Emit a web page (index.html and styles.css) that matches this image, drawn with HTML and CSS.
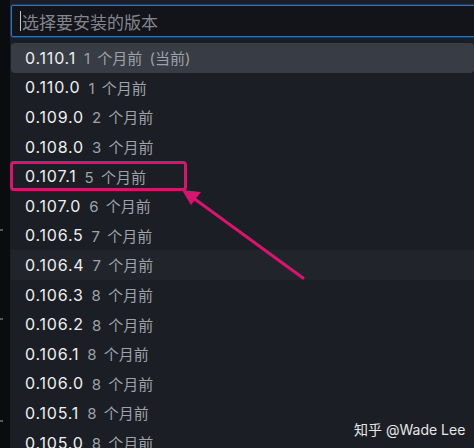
FILE: index.html
```html
<!DOCTYPE html>
<html lang="zh">
<head>
    <meta charset="UTF-8">
    <title>选择要安装的版本</title>
    <link rel="stylesheet" href="styles.css">
</head>
<body>
    <div class="side">
        <span class="tick t1"></span>
        <span class="tick t2"></span>
        <span class="tick t3"></span>
    </div>
    <div class="picker">
        <div class="search">
            <span class="caret"></span>
            <span class="placeholder">选择要安装的版本</span>
        </div>
        <ul class="versions">
            <li class="item active"><b>0.110.1</b><span>1 个月前 (当前)</span></li>
            <li class="item"><b>0.110.0</b><span>1 个月前</span></li>
            <li class="item"><b>0.109.0</b><span>2 个月前</span></li>
            <li class="item"><b>0.108.0</b><span>3 个月前</span></li>
            <li class="item marked"><b>0.107.1</b><span>5 个月前</span></li>
            <li class="item"><b>0.107.0</b><span>6 个月前</span></li>
            <li class="item"><b>0.106.5</b><span>7 个月前</span></li>
            <li class="item hover"><b>0.106.4</b><span>7 个月前</span></li>
            <li class="item"><b>0.106.3</b><span>8 个月前</span></li>
            <li class="item"><b>0.106.2</b><span>8 个月前</span></li>
            <li class="item"><b>0.106.1</b><span>8 个月前</span></li>
            <li class="item"><b>0.106.0</b><span>8 个月前</span></li>
            <li class="item"><b>0.105.1</b><span>8 个月前</span></li>
            <li class="item"><b>0.105.0</b><span>8 个月前</span></li>
        </ul>
    </div>

    <!-- 标注箭头 -->
    <svg class="arrow" width="474" height="448" viewBox="0 0 474 448">
        <line x1="303" y1="278" x2="192" y2="197" stroke="#d6156f" stroke-width="3" stroke-linecap="round"/>
        <polygon points="182,190 201,192 191,205" fill="#d6156f"/>
    </svg>

    <div class="mark">知乎 @Wade Lee</div>
</body>
</html>
```

FILE: styles.css
```css
body {
    margin: 0;
    width: 474px;
    height: 448px;
    overflow: hidden;
    display: flex;
    background: #1b1e25;
    font-family: Inter, "Noto Sans CJK SC", sans-serif;
}
.side {
    width: 10px;
    flex-shrink: 0;
    background: #0b0c0f;
    position: relative;
}
.tick {
    position: absolute;
    left: 0;
    width: 3px;
    height: 2px;
    background: #55585e;
}
.t1 { top: 229px; }
.t2 { top: 318px; }
.t3 { top: 420px; }
.picker {
    flex: 1;
    padding: 5px 0 0 1px;
}
.search {
    height: 30px;
    margin-right: -4px;
    border: 1px solid #3a70b5;
    box-shadow: 0 0 0 1px #1d3a60;
    border-radius: 2px;
    background: #12141a;
    display: flex;
    align-items: center;
    padding-left: 8px;
}
.caret {
    width: 1px;
    height: 20px;
    background: #c8c8c8;
    margin-right: 1px;
}
.placeholder {
    color: #83868d;
    font-size: 17px;
}
.versions {
    list-style: none;
    margin: 6px 0 0;
    padding: 0;
}
.item {
    height: 29.6px;
    display: flex;
    align-items: center;
    padding-left: 14px;
    border-radius: 4px;
    box-sizing: border-box;
}
.item b {
    font-weight: normal;
    color: #efefef;
    font-size: 16px;
    letter-spacing: 0.8px;
    margin-right: 8px;
}
.item span {
    color: #9fa2a8;
    font-size: 15px;
    word-spacing: 3px;
}
.active {
    background: #383c44;
}
.hover {
    background: #21242b;
    border-radius: 0;
}
.marked {
    width: 177px;
    margin-left: -1px;
    padding-left: 12px;
    border: 3px solid #d6156f;
    border-radius: 4px;
}
.arrow {
    position: absolute;
    left: 0;
    top: 0;
    pointer-events: none;
}
.mark {
    position: absolute;
    left: 354px;
    top: 419px;
    color: #e6e6e6;
    font-size: 14px;
}
```
